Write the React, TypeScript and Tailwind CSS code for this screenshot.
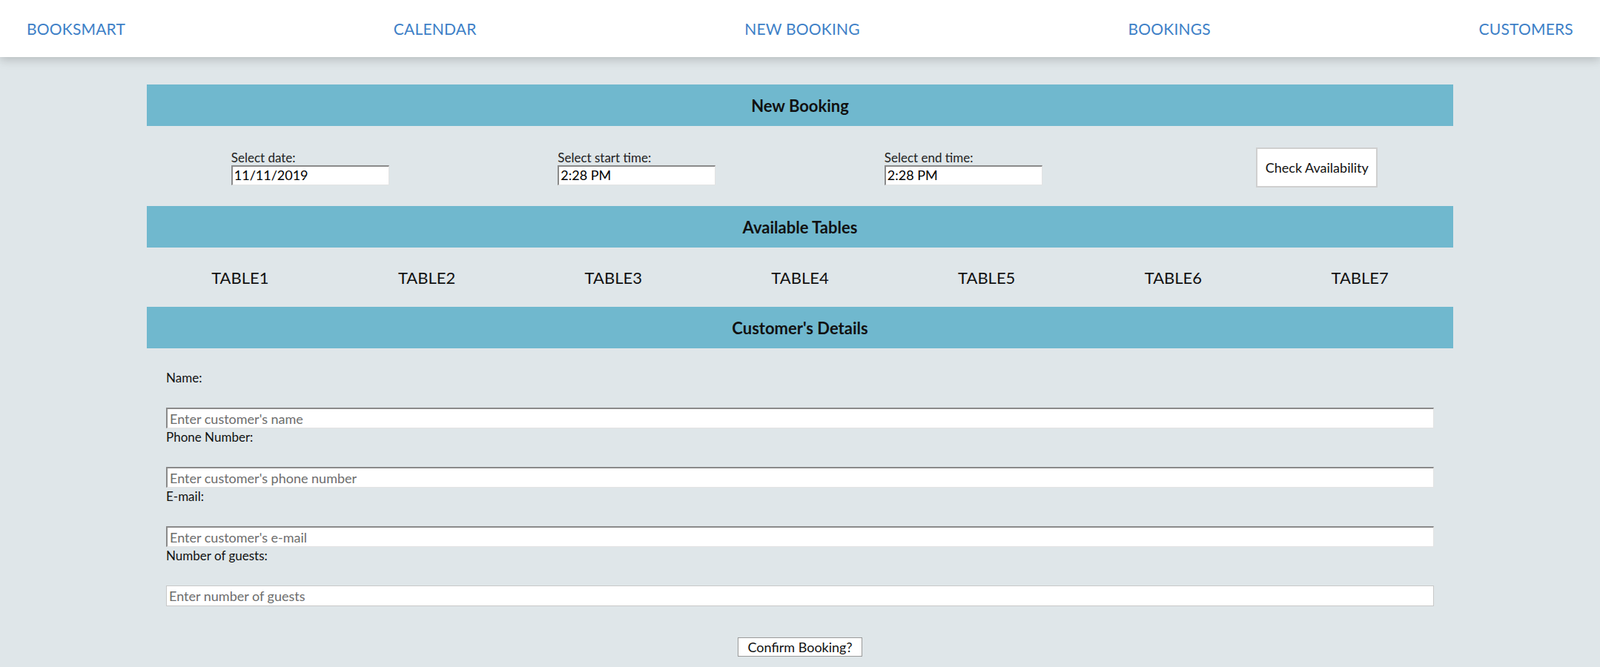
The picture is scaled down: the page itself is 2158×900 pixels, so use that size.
const navItems = ['BOOKSMART', 'CALENDAR', 'NEW BOOKING', 'BOOKINGS', 'CUSTOMERS'];
const tables = ['TABLE1', 'TABLE2', 'TABLE3', 'TABLE4', 'TABLE5', 'TABLE6', 'TABLE7'];
const fields = [
  { label: 'Name:', placeholder: "Enter customer's name" },
  { label: 'Phone Number:', placeholder: "Enter customer's phone number" },
  { label: 'E-mail:', placeholder: "Enter customer's e-mail" },
  { label: 'Number of guests:', placeholder: 'Enter number of guests' },
];

const lato = { fontFamily: 'Lato, "Liberation Sans", sans-serif' };
const arial = 'font-["Liberation_Sans",Arial,sans-serif]';

const Bar = ({ title }: { title: string }) => (
  <div className="h-[56px] bg-[#70b8ce] flex items-center justify-center text-[22px] font-bold text-[#111]">
    {title}
  </div>
);

const TimeField = ({ label, value }: { label: string; value: string }) => (
  <div className="flex flex-col items-start">
    <span className="text-[17px] leading-[20px] text-[#222]">{label}</span>
    <input
      readOnly
      value={value}
      className={`w-[213px] h-[27px] bg-white border-t-2 border-l-2 border-[#8a8a8a] border-r border-b border-r-[#e3e3e3] border-b-[#e3e3e3] px-[2px] text-[18px] text-black ${arial}`}
    />
  </div>
);

export default function App() {
  return (
    <div className="min-h-[900px] bg-[#dfe6e9]" style={lato}>
      <nav className="h-[77px] bg-white flex items-center justify-between px-[36px] shadow-[0_4px_12px_rgba(0,0,0,0.18)] relative z-10">
        {navItems.map(n => (
          <a key={n} className="text-[21px] text-[#3d7fc7] tracking-[0.2px]">{n}</a>
        ))}
      </nav>

      <div className="mx-[198px] pt-[37px]">
        <Bar title="New Booking" />
        <div className="grid grid-cols-4 items-center h-[108px] pt-[4px]">
          <div className="flex justify-center"><TimeField label="Select date:" value="11/11/2019" /></div>
          <div className="flex justify-center"><TimeField label="Select start time:" value="2:28 PM" /></div>
          <div className="flex justify-center"><TimeField label="Select end time:" value="2:28 PM" /></div>
          <div className="flex justify-center pl-[73px]">
            <button className={`w-[164px] h-[54px] bg-white border-2 border-[#cfcfcf] text-[18px] text-[#111] ${arial}`}>
              Check Availability
            </button>
          </div>
        </div>

        <Bar title="Available Tables" />
        <div className="grid grid-cols-7 h-[80px] items-center">
          {tables.map(t => (
            <div key={t} className="text-center text-[22px] text-[#111]">{t}</div>
          ))}
        </div>

        <Bar title="Customer's Details" />
        <div className="px-[26px] pt-[28px] flex flex-col">
          {fields.map((f, i) => (
            <div key={f.label} className="flex flex-col">
              <span className="text-[17px] h-[52px] leading-[24px] text-[#111]">{f.label}</span>
              <input
                placeholder={f.placeholder}
                className={`h-[28px] bg-white px-[3px] text-[18px] placeholder:text-[#6d6d6d] ${arial} ${
                  i === 3
                    ? 'border border-[#c8c8c8]'
                    : 'border-t-2 border-l-2 border-[#8a8a8a] border-r border-b border-r-[#e3e3e3] border-b-[#e3e3e3]'
                }`}
              />
            </div>
          ))}
        </div>
        <div className="flex justify-center pt-[42px]">
          <button className={`w-[168px] h-[26px] bg-white border border-[#9a9a9a] text-[18px] leading-none text-[#111] ${arial}`}>
            Confirm Booking?
          </button>
        </div>
      </div>
    </div>
  );
}
